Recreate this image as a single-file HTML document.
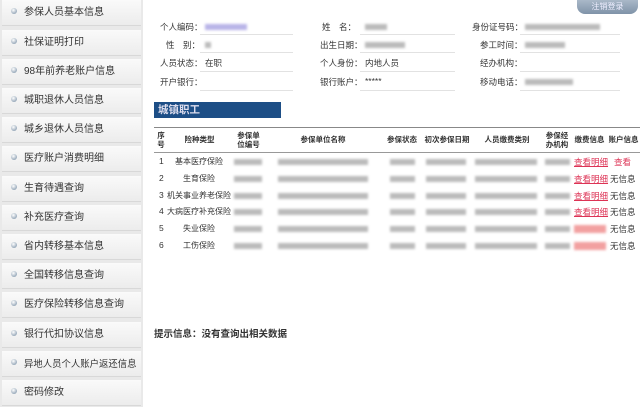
<!DOCTYPE html>
<html><head><meta charset="utf-8"><style>
body{margin:0;width:640px;height:407px;overflow:hidden;background:#fff;font-family:"Liberation Sans","Noto Sans CJK SC",sans-serif;position:relative;color:#333}
.side{position:absolute;left:0;top:0;width:143px;background:#e9e9e9;height:407px}
.it{position:absolute;left:2px;width:139px;height:25px;background:linear-gradient(#fafafa,#ececec);border-bottom:1px solid #d8d8d8;font-size:10px;line-height:25px;color:#333;overflow:hidden}
.it i{position:absolute;left:9px;top:8px;width:6px;height:6px;border-radius:50%;background:radial-gradient(circle at 40% 35%,#fff,#9ab 70%)}
.it span{position:absolute;left:22px;white-space:nowrap}
.a{position:absolute;font-size:8.5px;white-space:nowrap}
.b{position:absolute;height:6px;background:#bbb;filter:blur(1.2px)}
.ln{position:absolute;height:1px;background:#e2e2e2}
.hd{position:absolute;left:154px;top:102px;width:127px;height:16px;background:#1d4e86;color:#dde;font-size:10.5px;font-weight:bold;line-height:16px;padding-left:4px;box-sizing:border-box}
.th{position:absolute;font-size:7.5px;font-weight:bold;text-align:center;line-height:9px;color:#333}
.r{color:#d35}
</style></head><body>
<div class="side">
<div class="it" style="top:0"><i></i><span>参保人员基本信息</span></div>
<div class="it" style="top:30px"><i></i><span>社保证明打印</span></div>
<div class="it" style="top:59px"><i></i><span>98年前养老账户信息</span></div>
<div class="it" style="top:88px"><i></i><span>城职退休人员信息</span></div>
<div class="it" style="top:117px"><i></i><span>城乡退休人员信息</span></div>
<div class="it" style="top:146px"><i></i><span>医疗账户消费明细</span></div>
<div class="it" style="top:176px"><i></i><span>生育待遇查询</span></div>
<div class="it" style="top:205px"><i></i><span>补充医疗查询</span></div>
<div class="it" style="top:234px"><i></i><span>省内转移基本信息</span></div>
<div class="it" style="top:263px"><i></i><span>全国转移信息查询</span></div>
<div class="it" style="top:292px"><i></i><span>医疗保险转移信息查询</span></div>
<div class="it" style="top:322px"><i></i><span>银行代扣协议信息</span></div>
<div class="it" style="top:351px"><i></i><span style="font-size:9.4px">异地人员个人账户返还信息</span></div>
<div class="it" style="top:380px"><i></i><span>密码修改</span></div>
</div>
<div style="position:absolute;left:577px;top:0;width:61px;height:14px;border-radius:0 0 8px 8px;background:linear-gradient(#a9b8c8,#7f93a8);color:#eef;font-size:8px;text-align:center;line-height:13px">注销登录</div>

<div class="a" style="left:160px;top:21px">个人编码：</div><div class="b" style="left:205px;top:24px;width:42px;background:#b9b4e8"></div>
<div class="a" style="left:166px;top:39px">性　别：</div><div class="b" style="left:205px;top:42px;width:6px"></div>
<div class="a" style="left:160px;top:57px">人员状态：</div><div class="a" style="left:205px;top:57px">在职</div>
<div class="a" style="left:160px;top:76px">开户银行：</div>
<div class="ln" style="left:200px;top:34px;width:93px"></div><div class="ln" style="left:200px;top:52px;width:93px"></div><div class="ln" style="left:200px;top:71px;width:93px"></div><div class="ln" style="left:200px;top:90px;width:93px"></div>
<div class="a" style="left:322px;top:21px">姓　名：</div><div class="b" style="left:365px;top:24px;width:22px"></div>
<div class="a" style="left:320px;top:39px">出生日期：</div><div class="b" style="left:365px;top:42px;width:40px"></div>
<div class="a" style="left:320px;top:57px">个人身份：</div><div class="a" style="left:365px;top:57px">内地人员</div>
<div class="a" style="left:320px;top:76px">银行账户：</div><div class="a" style="left:365px;top:76px">*****</div>
<div class="ln" style="left:360px;top:34px;width:95px"></div><div class="ln" style="left:360px;top:52px;width:95px"></div><div class="ln" style="left:360px;top:71px;width:95px"></div><div class="ln" style="left:360px;top:90px;width:95px"></div>
<div class="a" style="left:472px;top:21px">身份证号码：</div><div class="b" style="left:525px;top:24px;width:75px"></div>
<div class="a" style="left:480px;top:39px">参工时间：</div><div class="b" style="left:525px;top:42px;width:40px"></div>
<div class="a" style="left:480px;top:57px">经办机构：</div>
<div class="a" style="left:480px;top:76px">移动电话：</div><div class="b" style="left:525px;top:79px;width:48px"></div>
<div class="ln" style="left:520px;top:34px;width:100px"></div><div class="ln" style="left:520px;top:52px;width:100px"></div><div class="ln" style="left:520px;top:71px;width:100px"></div><div class="ln" style="left:520px;top:90px;width:100px"></div>

<div class="hd">城镇职工</div>
<div style="position:absolute;left:154px;top:127px;width:486px;height:1px;background:#888"></div>
<div style="position:absolute;left:154px;top:152px;width:486px;height:1px;background:#999"></div>
<div class="th" style="left:154px;top:131px;width:14px">序<br>号</div>
<div class="th" style="left:168px;top:135px;width:63px">险种类型</div>
<div class="th" style="left:231px;top:131px;width:35px">参保单<br>位编号</div>
<div class="th" style="left:266px;top:135px;width:114px">参保单位名称</div>
<div class="th" style="left:382px;top:135px;width:40px">参保状态</div>
<div class="th" style="left:422px;top:135px;width:50px">初次参保日期</div>
<div class="th" style="left:472px;top:135px;width:70px">人员缴费类别</div>
<div class="th" style="left:542px;top:131px;width:30px">参保经<br>办机构</div>
<div class="th" style="left:572px;top:135px;width:35px">缴费信息</div>
<div class="th" style="left:607px;top:135px;width:33px">账户信息</div>

<div id="rows"></div>
<div class="a" style="left:154px;top:326px;font-size:9.5px;font-weight:bold">提示信息：没有查询出相关数据</div>
<script>
var names=["基本医疗保险","生育保险","机关事业养老保险","大病医疗补充保险","失业保险","工伤保险"];
var h="";
for(var i=0;i<6;i++){var y=156+i*16.8;
h+='<div class="a" style="left:159px;top:'+y+'px">'+(i+1)+'</div>';
h+='<div class="a" style="left:167px;width:64px;text-align:center;top:'+y+'px;font-size:8px">'+names[i]+'</div>';
var bs=[[234,28],[278,90],[390,25],[426,40],[475,62],[545,25]];
bs.forEach(function(b){h+='<div class="b" style="left:'+b[0]+'px;top:'+(y+3)+'px;width:'+b[1]+'px"></div>'});
if(i<4)h+='<div class="a r" style="left:574px;top:'+y+'px;text-decoration:underline">查看明细</div>';
else h+='<div class="b" style="left:574px;top:'+(y+2)+'px;width:32px;height:8px;background:#f2a0a0"></div>';
h+= i==0?'<div class="a r" style="left:614px;top:'+y+'px">查看</div>':'<div class="a" style="left:610px;top:'+y+'px">无信息</div>';}
document.getElementById("rows").innerHTML=h;
</script>
</body></html>
